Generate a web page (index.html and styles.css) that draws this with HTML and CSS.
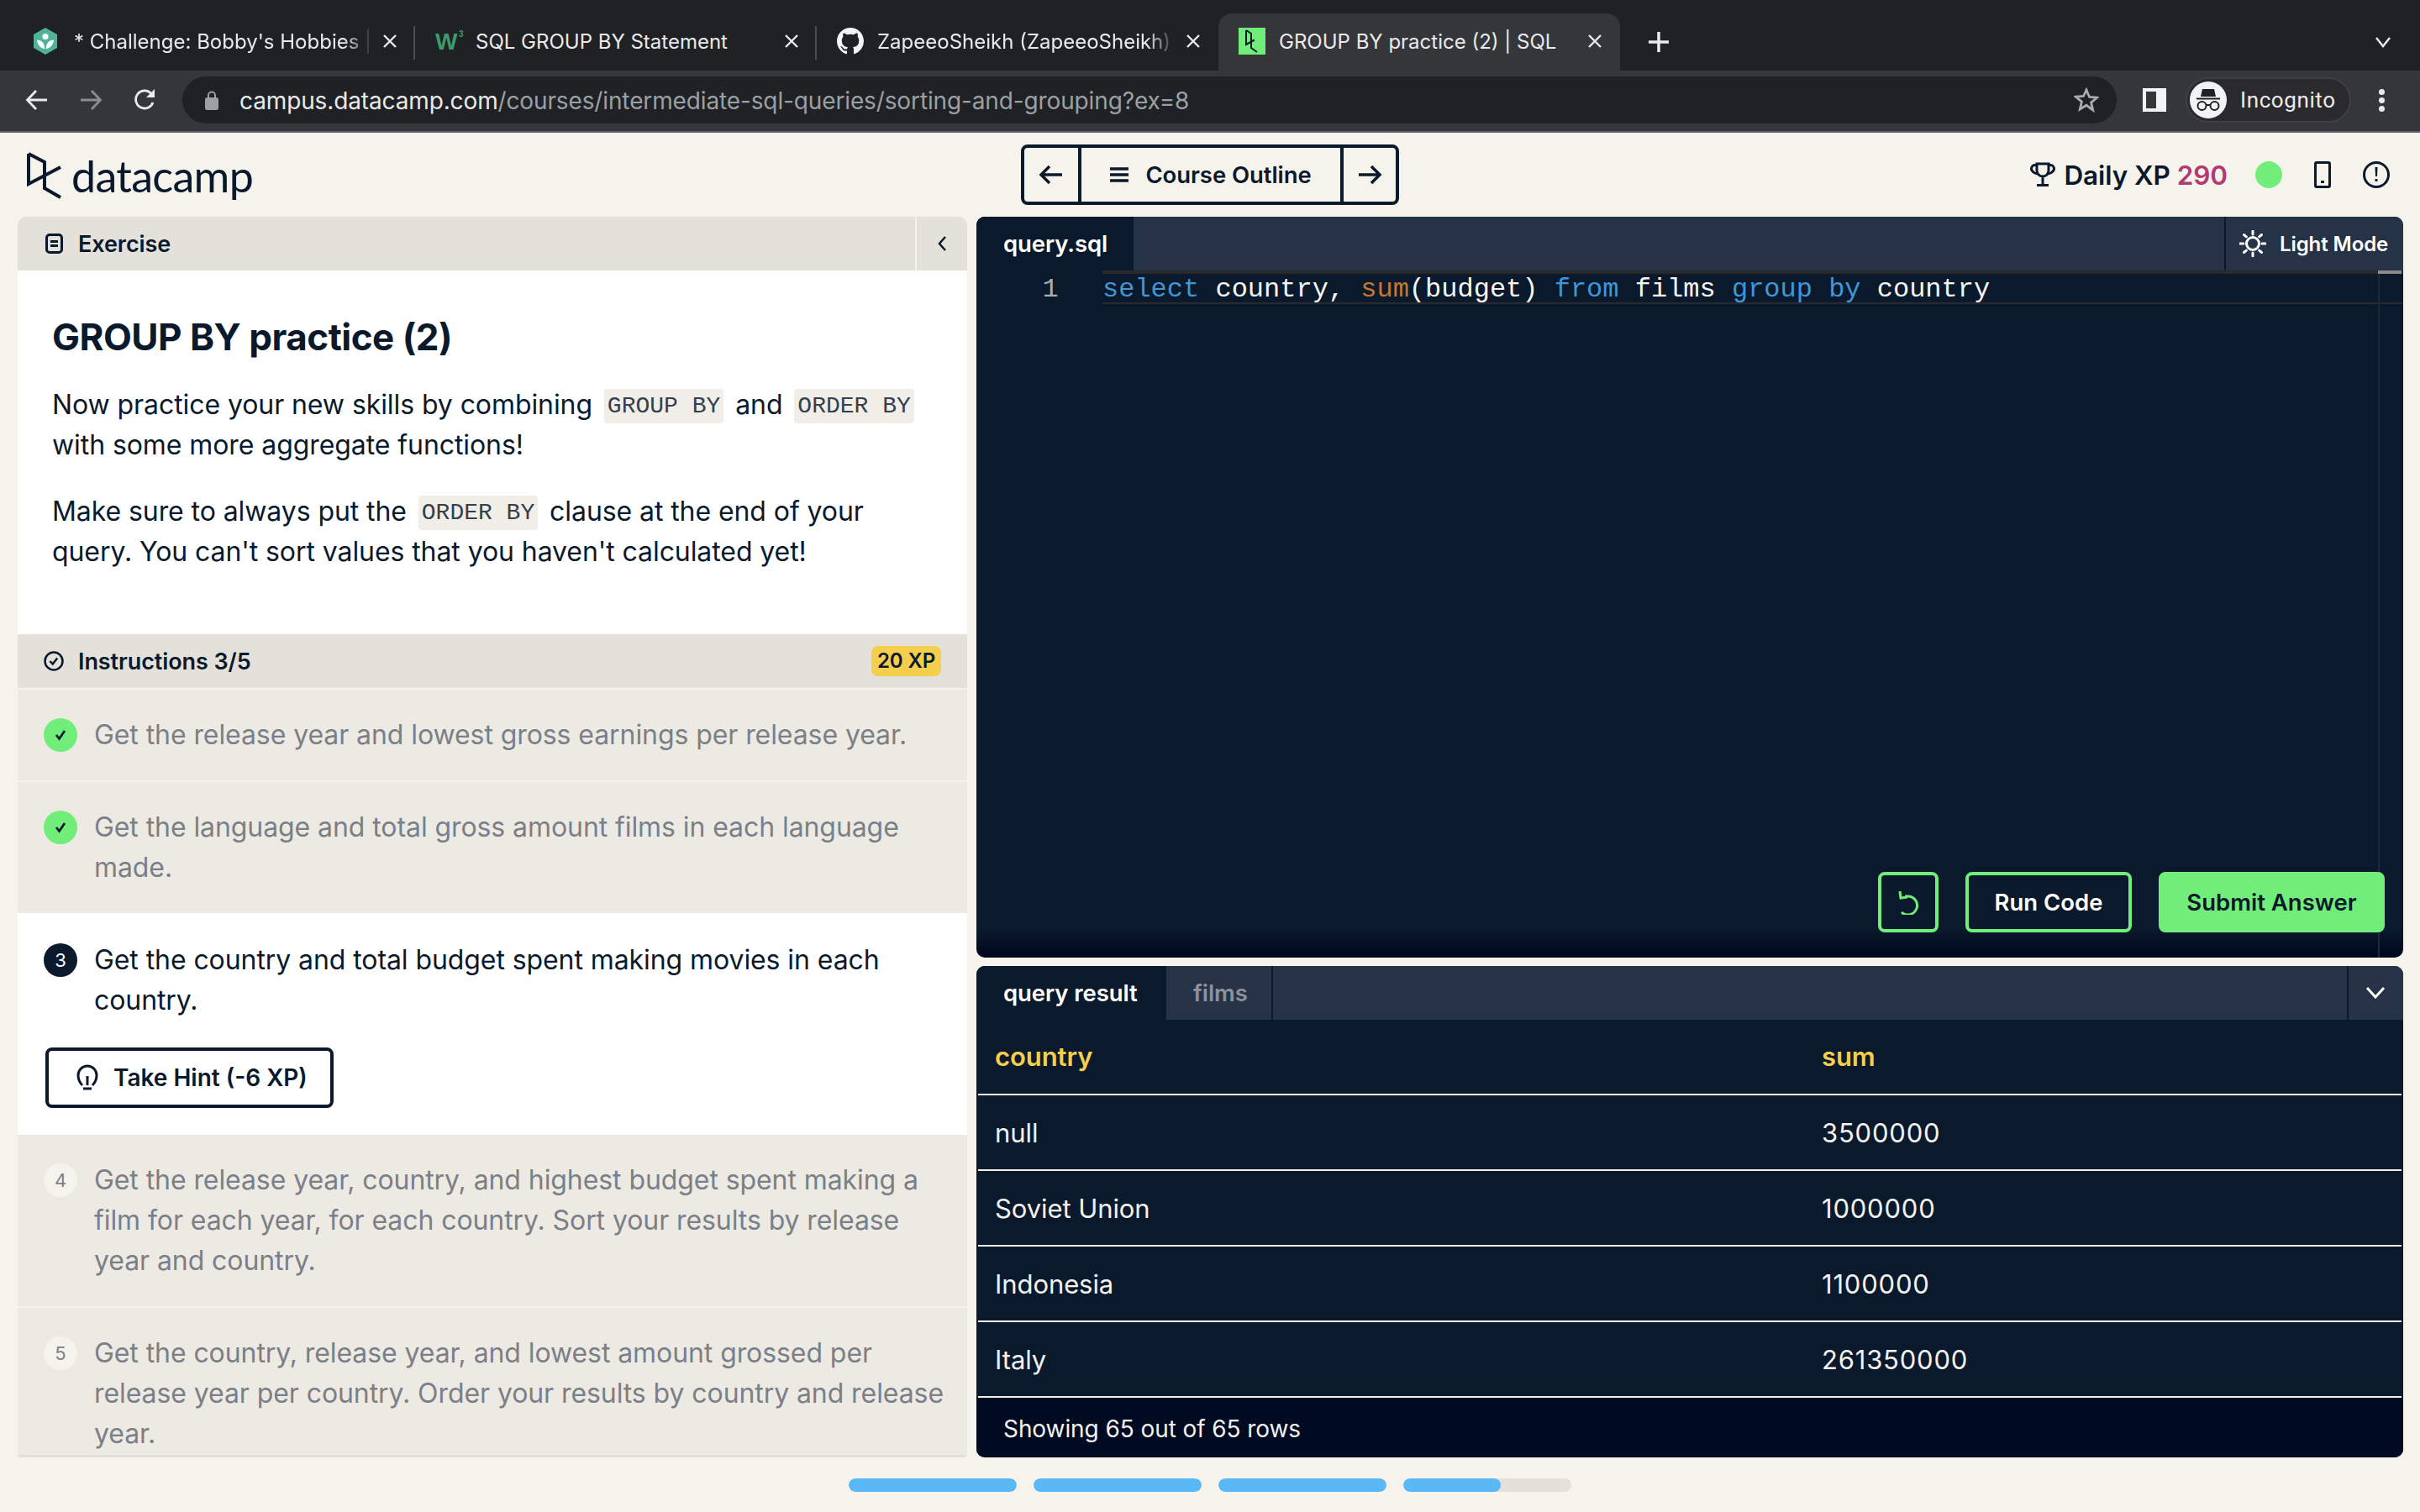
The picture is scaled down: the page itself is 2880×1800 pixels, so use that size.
FILE: index.html
```html
<!DOCTYPE html>
<html lang="en">
<head>
<meta charset="utf-8">
<title>GROUP BY practice (2) | SQL</title>
<link rel="stylesheet" href="styles.css">
</head>
<body>
<div class="browser">
  <div class="tabstrip">
    <div class="tab">
      <svg class="fav" viewBox="0 0 28 32"><path d="M14 0 28 8v16l-14 8-14-8V8z" fill="#4fb495"/><circle cx="14" cy="10.5" r="3.6" fill="#fff"/><path d="M4 14.5c5 .2 9 3 9.300 10.500C8 24.500 4.500 20 4 14.500zM24 14.500c-5 .2-9 3-9.300 10.500 5.300-.5 8.800-5 9.300-10.500z" fill="#fff"/></svg>
      <span class="tab-title fade">* Challenge: Bobby's Hobbies | Khan Academy</span>
      <svg class="close" viewBox="0 0 16 16"><path d="M1 1l14 14M15 1 1 15"/></svg>
    </div>
    <div class="tab">
      <span class="fav w3"><span class="w3-w">W</span><span class="w3-3">3</span></span>
      <span class="tab-title">SQL GROUP BY Statement</span>
      <svg class="close" viewBox="0 0 16 16"><path d="M1 1l14 14M15 1 1 15"/></svg>
    </div>
    <div class="tab last">
      <svg class="fav" viewBox="0 0 16 16"><path fill="#f1f3f4" d="M8 0C3.580 0 0 3.580 0 8c0 3.540 2.290 6.530 5.470 7.590.4.070.55-.17.55-.38 0-.19-.01-.82-.01-1.490-2.010.37-2.530-.49-2.690-.94-.09-.23-.48-.94-.82-1.130-.28-.15-.68-.52-.01-.53.63-.01 1.080.58 1.230.82.72 1.210 1.870.87 2.330.66.07-.52.28-.87.51-1.070-1.780-.2-3.640-.89-3.640-3.950 0-.87.31-1.590.82-2.150-.08-.2-.36-1.020.08-2.120 0 0 .67-.21 2.200.82.64-.18 1.320-.27 2-.27.68 0 1.360.09 2 .27 1.530-1.040 2.200-.82 2.200-.82.44 1.100.16 1.920.08 2.120.51.56.82 1.270.82 2.150 0 3.070-1.870 3.750-3.650 3.950.29.25.54.73.54 1.480 0 1.070-.01 1.930-.01 2.200 0 .21.15.46.55.38A8.013 8.013 0 0016 8c0-4.420-3.580-8-8-8z"/></svg>
      <span class="tab-title fade">ZapeeoSheikh (ZapeeoSheikh) · GitHub</span>
      <svg class="close" viewBox="0 0 16 16"><path d="M1 1l14 14M15 1 1 15"/></svg>
    </div>
    <div class="tab active">
      <svg class="fav" viewBox="0 0 32 32"><rect width="32" height="32" fill="#71ee79"/><path d="M9 3v17l10-5.500M9 3l6 4v17l7 5" fill="none" stroke="#0a1a2c" stroke-width="2"/></svg>
      <span class="tab-title">GROUP BY practice (2) | SQL</span>
      <svg class="close" viewBox="0 0 16 16"><path d="M1 1l14 14M15 1 1 15"/></svg>
    </div>
    <svg class="newtab" viewBox="0 0 24 24"><path d="M12 0v24M0 12h24"/></svg>
    <svg class="tabmenu" viewBox="0 0 20 14"><path d="M2 2l8 10 8-10"/></svg>
  </div>
  <div class="toolbar">
    <svg class="tool" viewBox="0 0 28 28"><path d="M26 14H3M13 3 2.500 14 13 25"/></svg>
    <svg class="tool dim" viewBox="0 0 28 28"><path d="M2 14h23M15 3l10.500 11L15 25"/></svg>
    <svg class="tool" viewBox="0 0 28 28"><path d="M24 17a10.500 10.500 0 1 1-2.500-11L25 9.500"/><path class="solid" d="M26 1v10H16z"/></svg>
    <div class="omnibox">
      <svg class="lock" viewBox="0 0 16 24"><path d="M4 10V6.500a4 4 0 0 1 8 0V10" fill="none" stroke="#9aa0a6" stroke-width="2"/><rect y="9" width="16" height="15" rx="2.500" fill="#9aa0a6"/></svg>
      <span class="url"><span class="host">campus.datacamp.com</span>/courses/intermediate-sql-queries/sorting-and-grouping?ex=8</span>
      <svg class="star" viewBox="0 0 30 30"><path d="M15 3l3.500 8.500 9 .7-6.900 5.900 2.100 8.900L15 21.300 7.300 26l2.100-8.900-6.900-5.900 9-.7z"/></svg>
    </div>
    <span class="sidepanel"></span>
    <div class="profile">
      <svg class="avatar" viewBox="0 0 44 44"><circle cx="22" cy="22" r="22" fill="#f1f3f4"/><path d="M15 9h14l2 9H13zM8 19.500h28v2H8z" fill="#202124"/><g fill="none" stroke="#202124" stroke-width="2"><circle cx="14.500" cy="29" r="5"/><circle cx="29.500" cy="29" r="5"/><path d="M19.500 28h5"/></g></svg>
      <span class="profile-name">Incognito</span>
    </div>
    <span class="dots"><i></i><i></i><i></i></span>
  </div>
</div>

<div class="app">
  <header class="topbar">
    <div class="logo">
      <svg class="logo-mark" viewBox="0 0 42 56"><path d="M2 2v36l38-20M2 2l19 10v31l19 11"/></svg>
      <span class="logo-text">datacamp</span>
    </div>
    <div class="outline">
      <span class="outline-arrow"><svg class="ico" viewBox="0 0 30 26"><path d="M28 13H3M13 3 3 13l10 10"/></svg></span>
      <span class="outline-mid"><svg class="burger" viewBox="0 0 22 20"><path d="M0 3h22M0 10h22M0 17h22"/></svg>Course Outline</span>
      <span class="outline-arrow right-arrow"><svg class="ico" viewBox="0 0 30 26"><path d="M2 13h25M17 3l10 10-10 10"/></svg></span>
    </div>
    <div class="xp">
      <svg class="trophy" viewBox="0 0 30 30"><g fill="none" stroke="#0a1a2c" stroke-width="3"><path d="M8 2h14v8a7 7 0 0 1-14 0zM8 4C2 2 0 8 3 11c1 1.500 3 2.500 6 3M22 4c6-2 8 4 5 7-1 1.500-3 2.500-6 3M15 17v9M8 27.500h14"/></g></svg>
      <span class="xp-label">Daily XP <span class="xp-num">290</span></span>
      <span class="xp-dot"></span>
      <svg class="phone" viewBox="0 0 20 32"><rect x="1.500" y="1.500" width="17" height="29" rx="1.500" fill="none" stroke="#0a1a2c" stroke-width="3"/><rect x="8" y="23" width="4" height="3" fill="#0a1a2c"/></svg>
      <svg class="info" viewBox="0 0 32 32"><circle cx="16" cy="16" r="14.500" fill="none" stroke="#0a1a2c" stroke-width="3"/><path d="M14.500 7h3l-.5 11h-2zM14.500 21h3v3h-3z" fill="#0a1a2c"/></svg>
    </div>
  </header>

  <main class="workspace">
    <section class="left">
      <div class="left-head">
        <svg class="head-ico" viewBox="0 0 21 24"><rect x="1.500" y="1.500" width="18" height="21" rx="3.500" fill="none" stroke="#0a1a2c" stroke-width="3"/><path d="M6 9.500h9M6 14.500h9" stroke="#0a1a2c" stroke-width="3"/></svg>
        <span class="head-label">Exercise</span>
        <span class="collapse"><svg viewBox="0 0 12 20"><path d="M10 2 3 10l7 8"/></svg></span>
      </div>
      <div class="assignment">
        <h1>GROUP BY practice (2)</h1>
        <p>Now practice your new skills by combining <code>GROUP BY</code> and <code>ORDER BY</code> with some more aggregate functions!</p>
        <p>Make sure to always put the <code>ORDER BY</code> clause at the end of your query. You can't sort values that you haven't calculated yet!</p>
      </div>
      <div class="left-head instr-head">
        <svg class="head-ico round" viewBox="0 0 24 24"><circle cx="12" cy="12" r="10.500" fill="none" stroke="#0a1a2c" stroke-width="2.500"/><path d="M7.500 12l3.200 3.500 5.500-7" fill="none" stroke="#0a1a2c" stroke-width="2.500"/></svg>
        <span class="head-label">Instructions 3/5</span>
        <span class="badge">20 XP</span>
      </div>
      <ol class="steps">
        <li class="step done"><span class="num"><svg viewBox="0 0 16 16"><path d="M3 8l3.500 4.500L13 3"/></svg></span><span class="step-text">Get the release year and lowest gross earnings per release year.</span></li>
        <li class="step done"><span class="num"><svg viewBox="0 0 16 16"><path d="M3 8l3.500 4.500L13 3"/></svg></span><span class="step-text">Get the language and total gross amount films in each language made.</span></li>
        <li class="step current"><span class="num">3</span><div class="step-text">Get the country and total budget spent making movies in each country.
          <button class="hint"><svg viewBox="0 0 28 32"><path d="M8 25C4 21 3 17 3 13a11 11 0 0 1 22 0c0 4-1 8-5 12M14 14v11M9 29h10" fill="none" stroke="#0a1a2c" stroke-width="3"/></svg>Take Hint (-6 XP)</button></div></li>
        <li class="step todo"><span class="num">4</span><span class="step-text">Get the release year, country, and highest budget spent making a film for each year, for each country. Sort your results by release year and country.</span></li>
        <li class="step todo"><span class="num">5</span><span class="step-text">Get the country, release year, and lowest amount grossed per release year per country. Order your results by country and release year.</span></li>
      </ol>
    </section>

    <section class="right">
      <div class="editor">
        <div class="panel-tabs">
          <span class="ptab on edit-tab">query.sql</span>
          <span class="light"><svg viewBox="0 0 32 32"><circle cx="16" cy="16" r="7.500" fill="none" stroke="#fff" stroke-width="3"/><path d="M16 1v4M16 27v4M1 16h4M27 16h4M5.500 5.500l2.800 2.300M23.700 24.200l2.800 2.300M26.500 5.500l-2.800 2.300M8.300 24.200l-2.800 2.300" stroke="#fff" stroke-width="3" stroke-linecap="round"/></svg>Light Mode</span>
        </div>
        <div class="code-body">
          <div class="code-line"><span class="ln">1</span><span class="code"><span class="kw">select</span> country, <span class="fn">sum</span>(budget) <span class="kw">from</span> films <span class="kw">group by</span> country</span></div>
          <div class="actions">
            <button class="btn reset"><svg viewBox="0 0 26 30"><path d="M9 8h3a11 11 0 1 1-7 19" fill="none" stroke="#71ee79" stroke-width="3"/><path d="M3 2l1 8 8-1" fill="none" stroke="#71ee79" stroke-width="3"/></svg></button>
            <button class="btn run">Run Code</button>
            <button class="btn submit">Submit Answer</button>
          </div>
        </div>
      </div>
      <div class="results">
        <div class="panel-tabs">
          <span class="ptab on res-tab">query result</span>
          <span class="ptab films">films</span>
          <span class="res-chevron"><svg viewBox="0 0 24 16"><path d="M2 2l10 11L22 2"/></svg></span>
        </div>
        <table class="grid">
          <thead><tr><th>country</th><th>sum</th></tr></thead>
          <tbody>
            <tr><td>null</td><td>3500000</td></tr>
            <tr><td>Soviet Union</td><td>1000000</td></tr>
            <tr><td>Indonesia</td><td>1100000</td></tr>
            <tr><td>Italy</td><td>261350000</td></tr>
          </tbody>
        </table>
        <div class="rows-note">Showing 65 out of 65 rows</div>
      </div>
    </section>
  </main>

  <div class="progress">
    <span class="seg"><i class="full"></i></span>
    <span class="seg"><i class="full"></i></span>
    <span class="seg"><i class="full"></i></span>
    <span class="seg"><i class="part"></i></span>
  </div>
</div>
</body>
</html>
```
FILE: styles.css
```css
* { box-sizing: border-box; }
html, body { margin: 0; padding: 0; }
body {
  width: 2880px;
  height: 1800px;
  overflow: hidden;
  background: #f6f3ec;
  color: #0a1a2c;
  font-family: "Inter", "Noto Sans", sans-serif;
  font-size: 32px;
  letter-spacing: -.08px;
}
svg { display: block; flex: none; }

/* browser chrome */
.browser { font-family: "Inter", "Liberation Sans", sans-serif; letter-spacing: 0; }
.tabstrip {
  height: 84px;
  background: #202124;
  padding: 16px 0 0 16px;
  display: flex;
  align-items: stretch;
  position: relative;
}
.tab {
  width: 478px;
  display: flex;
  align-items: center;
  padding: 1px 24px 3px 24px;
  position: relative;
  color: #e8eaed;
  font-size: 24px;
}
.tab::after {
  content: "";
  position: absolute;
  right: 0;
  top: 15px;
  height: 40px;
  width: 2px;
  background: #4a4c50;
}
.tab.last::after, .tab.active::after { display: none; }
.tab.active {
  background: #35363a;
  border-radius: 16px 16px 0 0;
}
.fav { width: 32px; height: 32px; flex: none; }
.tab:first-child .fav { width: 28px; margin-right: 4px; }
.w3 { position: relative; display: block; font-family: "Liberation Sans", sans-serif; font-weight: 700; color: #3f9a6b; }
.w3-w { font-size: 28px; line-height: 32px; position: absolute; left: 0; top: 1px; }
.w3-3 { font-size: 10px; line-height: 10px; position: absolute; left: 28px; top: 3px; }
.tab-title {
  margin-left: 16px;
  width: 356px;
  white-space: nowrap;
  overflow: hidden;
}
.fade { -webkit-mask-image: linear-gradient(90deg, #000 90%, transparent 100%); mask-image: linear-gradient(90deg, #000 90%, transparent 100%); }
.close { width: 16px; height: 16px; margin-left: auto; margin-right: -2px; }
.close path { fill: none; stroke: #e8eaed; stroke-width: 2.400; }
.newtab { width: 24px; height: 24px; margin: 22px 0 0 34px; }
.newtab path { fill: none; stroke: #e8eaed; stroke-width: 3.500; }
.tabmenu { width: 20px; height: 14px; position: absolute; right: 34px; top: 43px; }
.tabmenu path { fill: none; stroke: #e8eaed; stroke-width: 2.500; }

.toolbar {
  height: 74px;
  background: #35363a;
  border-bottom: 2px solid #5f6166;
  padding: 8px 0 10px 30px;
  display: flex;
  align-items: center;
}
.tool { width: 28px; height: 28px; margin-right: 36px; }
.tool path { fill: none; stroke: #e8eaed; stroke-width: 2.800; }
.tool.dim path { stroke: #8a8c90; }
.tool .solid { fill: #e8eaed; stroke: none; }
.omnibox {
  margin-left: -5px;
  width: 2302px;
  height: 56px;
  border-radius: 28px;
  background: #202124;
  display: flex;
  align-items: center;
  padding-left: 27px;
  padding-right: 21px;
  margin-right: 31px;
}
.lock { width: 16px; height: 24px; }
.url { margin-left: 25px; font-size: 28px; color: #9aa0a6; white-space: nowrap; letter-spacing: -.13px; padding-top: 2px; }
.host { color: #e8eaed; }
.star { width: 30px; height: 30px; margin-left: auto; }
.star path { fill: none; stroke: #a9acb0; stroke-width: 2.800; }
.sidepanel {
  width: 28px;
  height: 28px;
  border: solid #f1f3f4;
  border-width: 4px 12px 4px 4px;
  margin-right: 23px;
}
.profile {
  width: 197px;
  height: 54px;
  border-radius: 27px;
  background: #2a2a2e;
  border: 2px solid #3f4044;
  display: flex;
  align-items: center;
  padding-left: 3px;
}
.avatar { width: 44px; height: 44px; }
.profile-name { margin-left: 16px; font-size: 26px; color: #e8eaed; font-family: "Roboto", sans-serif; letter-spacing: .6px; }
.dots { margin-left: 33px; display: flex; flex-direction: column; gap: 3px; }
.dots i { width: 7px; height: 7px; border-radius: 50%; background: #e8eaed; display: block; }

/* app header */
.topbar {
  height: 100px;
  display: grid;
  grid-template-columns: 1fr 450px 1fr;
  align-items: center;
  padding: 0 36px 0 32px;
}
.logo { display: flex; align-items: flex-start; }
.logo-mark { width: 42px; height: 56px; margin-top: 4px; }
.logo-mark path { fill: none; stroke: #0a1a2c; stroke-width: 4; }
.logo-text { font-family: "Lato", sans-serif; font-size: 52px; line-height: 60px; letter-spacing: -.7px; margin-left: 11px; margin-top: 2px; }
.outline {
  margin-left: 2px;
  height: 72px;
  width: 450px;
  border: 4px solid #0a1a2c;
  border-radius: 8px;
  display: flex;
}
.outline-arrow { width: 64px; display: flex; align-items: center; justify-content: center; }
.right-arrow { width: 62px; }
.ico { width: 30px; height: 26px; }
.ico path { fill: none; stroke: #0a1a2c; stroke-width: 3.500; }
.outline-mid {
  flex: 1;
  border: solid #0a1a2c;
  border-width: 0 4px;
  display: flex;
  align-items: center;
  justify-content: center;
  gap: 20px;
  font-size: 27.500px;
  font-weight: 600;
}
.burger { width: 22px; height: 20px; }
.burger path { stroke: #0a1a2c; stroke-width: 3.500; }
.xp { display: flex; align-items: center; justify-content: flex-end; }
.trophy { width: 30px; height: 30px; }
.xp-label { margin-left: 10px; font-size: 31.500px; font-weight: 600; }
.xp-num { color: #b23a72; }
.xp-dot { width: 32px; height: 32px; border-radius: 50%; background: #71ee79; margin-left: 33px; }
.phone { width: 20px; height: 32px; margin-left: 38px; }
.info { width: 32px; height: 32px; margin-left: 38px; }

/* workspace */
.workspace {
  height: 1477px;
  padding: 0 20px 0 21px;
  display: grid;
  grid-template-columns: 1130px 1698px;
  column-gap: 11px;
}
.left {
  background: #fff;
  border-radius: 10px 10px 4px 4px;
  overflow: hidden;
  display: flex;
  flex-direction: column;
  border-bottom: 3px solid #e3e0da;
}
.left-head {
  flex: none;
  height: 64px;
  background: #e4e1da;
  display: flex;
  align-items: center;
  padding-left: 33px;
  font-weight: 600;
  font-size: 27px;
}
.head-ico { width: 21px; height: 24px; }
.head-ico.round { width: 24px; height: 24px; margin-left: -2px; margin-right: -1px; }
.head-label { margin-left: 18px; }
.collapse {
  margin-left: auto;
  width: 62px;
  height: 100%;
  border-left: 2px solid #f6f3ec;
  display: flex;
  align-items: center;
  justify-content: center;
}
.collapse svg { width: 12px; height: 20px; }
.collapse path { fill: none; stroke: #0a1a2c; stroke-width: 2.500; }
.assignment {
  flex: none;
  height: 433px;
  padding: 0 41px;
}
h1 { margin: 0; padding-top: 51px; font-size: 44px; line-height: 56px; font-weight: 700; letter-spacing: -.5px; }
.assignment p { margin: 0; line-height: 48px; padding-top: 31px; }
.assignment h1 + p { padding-top: 29px; }
code {
  font-family: "Liberation Mono", monospace;
  font-size: 28px;
  line-height: 1;
  letter-spacing: 0;
  vertical-align: 2px;
  background: #f1eee7;
  border-radius: 4px;
  padding: 5px 4px;
  margin: 0 5px;
  color: #33404f;
}
.instr-head { padding-right: 31px; }
.badge {
  margin-left: auto;
  background: #f5cf4b;
  border-radius: 8px;
  height: 36px;
  width: 83px;
  font-size: 24px;
  line-height: 36px;
  text-align: center;
}
.steps {
  list-style: none;
  margin: 0;
  padding: 2px 0 0;
  flex: 1;
  background: #f6f3ec;
  display: flex;
  flex-direction: column;
  gap: 2px;
  overflow: hidden;
}
.step {
  flex: none;
  display: flex;
  padding: 30px 20px 30px 31px;
  background: #edeae3;
  color: #7b7f87;
  line-height: 48px;
}
.step.current { background: #fff; color: #0a1a2c; margin-top: -2px; padding-top: 32px; padding-bottom: 32px; }
.step.todo:nth-child(4) { margin-top: -2px; }
.num {
  flex: none;
  width: 40px;
  height: 40px;
  margin-top: 4px;
  margin-right: 20px;
  border-radius: 50%;
  display: flex;
  align-items: center;
  justify-content: center;
  font-size: 22px;
  line-height: 1;
}
.done .num { background: #71ee79; }
.done .num svg { width: 16px; height: 16px; }
.done .num path { fill: none; stroke: #0a1a2c; stroke-width: 2.800; }
.current .num { background: #0a1a2c; color: #fff; }
.todo .num { background: #f6f3ec; color: #7b7f87; }
.hint {
  display: flex;
  align-items: center;
  gap: 17px;
  margin: 32px 0 0 -58px;
  width: 343px;
  height: 72px;
  padding: 0 0 0 32px;
  background: #fff;
  border: 4px solid #0a1a2c;
  border-radius: 8px;
  font: 600 28px "Inter", sans-serif;
  color: #0a1a2c;
}
.hint svg { width: 28px; height: 32px; }

/* right side */
.right { display: flex; flex-direction: column; gap: 10px; }
.editor {
  height: 882px;
  flex: none;
  background: linear-gradient(180deg, #0a1a2c calc(100% - 34px), #00071f calc(100% - 4px));
  border-radius: 10px;
  overflow: hidden;
  display: flex;
  flex-direction: column;
}
.panel-tabs {
  flex: none;
  height: 64px;
  background: #263246;
  display: flex;
  align-items: stretch;
  font-weight: 600;
  font-size: 27.500px;
}
.ptab { display: flex; align-items: center; color: #fff; padding-left: 32px; }
.ptab.on { background: #0a1a2c; }
.edit-tab { width: 187px; }
.res-tab { width: 226px; }
.films { padding-left: 32px; width: 127px; color: #8b929c; border-right: 2px solid #0a1a2c; }
.light {
  margin-left: auto;
  width: 213px;
  border-left: 2px solid #0a1a2c;
  display: flex;
  align-items: center;
  padding-left: 16px;
  gap: 16px;
  color: #fff;
  font-size: 24px;
}
.light svg { width: 32px; height: 32px; }
.code-body {
  flex: 1;
  display: flex;
  flex-direction: column;
  position: relative;
}
.code-line {
  height: 40px;
  display: flex;
  align-items: stretch;
  font: 32px/34px "Liberation Mono", monospace;
  letter-spacing: 0;
  color: #f5f5f5;
  white-space: pre;
  position: relative;
}
.code {
  flex: 1;
  padding-top: 2px;
  border-top: 4px solid #2a2a2a;
  border-bottom: 2px solid #2a2a2a;
}
.code-line::after {
  content: "";
  position: absolute;
  right: 2px;
  top: 0;
  width: 28px;
  height: 4px;
  background: #8a8a8a;
}
.code-body::after {
  content: "";
  position: absolute;
  right: 28px;
  top: 4px;
  bottom: 0;
  width: 2px;
  background: #1c2a3b;
}
.ln { width: 150px; text-align: center; color: #a9adb3; flex: none; padding: 6px 0 0 26px; }
.kw { color: #3f97d8; }
.fn { color: #c8772d; }
.actions {
  margin-top: auto;
  padding: 0 22px 30px 0;
  display: flex;
  justify-content: flex-end;
  gap: 32px;
  position: relative;
  z-index: 1;
}
.btn {
  height: 72px;
  border-radius: 8px;
  border: 4px solid #71ee79;
  background: #0a1a2c;
  color: #fff;
  font: 600 27.500px "Inter", sans-serif;
  padding: 0;
}
.reset { width: 72px; display: flex; align-items: center; justify-content: center; }
.reset svg { width: 26px; height: 30px; }
.run { width: 198px; }
.submit { width: 269px; background: #71ee79; color: #0a1a2c; }

.results {
  flex: 1;
  background: #0a1a2c;
  border-radius: 10px;
  overflow: hidden;
  display: flex;
  flex-direction: column;
}
.res-chevron {
  margin-left: auto;
  width: 67px;
  border-left: 2px solid #0a1a2c;
  padding-right: 2px;
  display: flex;
  align-items: center;
  justify-content: center;
}
.res-chevron svg { width: 24px; height: 16px; }
.res-chevron path { fill: none; stroke: #fff; stroke-width: 3; }
.grid {
  table-layout: fixed;
  width: 1694px;
  margin-left: 2px;
  border-collapse: collapse;
  color: #f2f2f2;
}
.grid tr { height: 90px; border-bottom: 2px solid #f1eee7; }
.grid thead tr { height: 89px; }
.grid th, .grid td { padding: 0 0 0 20px; text-align: left; font-size: 31px; font-weight: 400; }
.grid td:nth-child(2) { letter-spacing: .8px; }
.grid th { color: #f5cf4b; font-weight: 600; padding-bottom: 2px; }
.grid th:first-child, .grid td:first-child { width: 984px; }
.rows-note {
  flex: 1;
  background: #000a20;
  color: #f2f2f2;
  padding: 2px 0 0 32px;
  display: flex;
  align-items: center;
  font-size: 28px;
}

.progress {
  display: flex;
  justify-content: center;
  gap: 20px;
  padding-top: 25px;
}
.seg { width: 200px; height: 16px; border-radius: 8px; background: #e4e1da; overflow: hidden; display: block; }
.seg i { display: block; height: 100%; background: #5ab8f7; border-radius: 8px; }
.full { width: 100%; }
.part { width: 116px; }
```
